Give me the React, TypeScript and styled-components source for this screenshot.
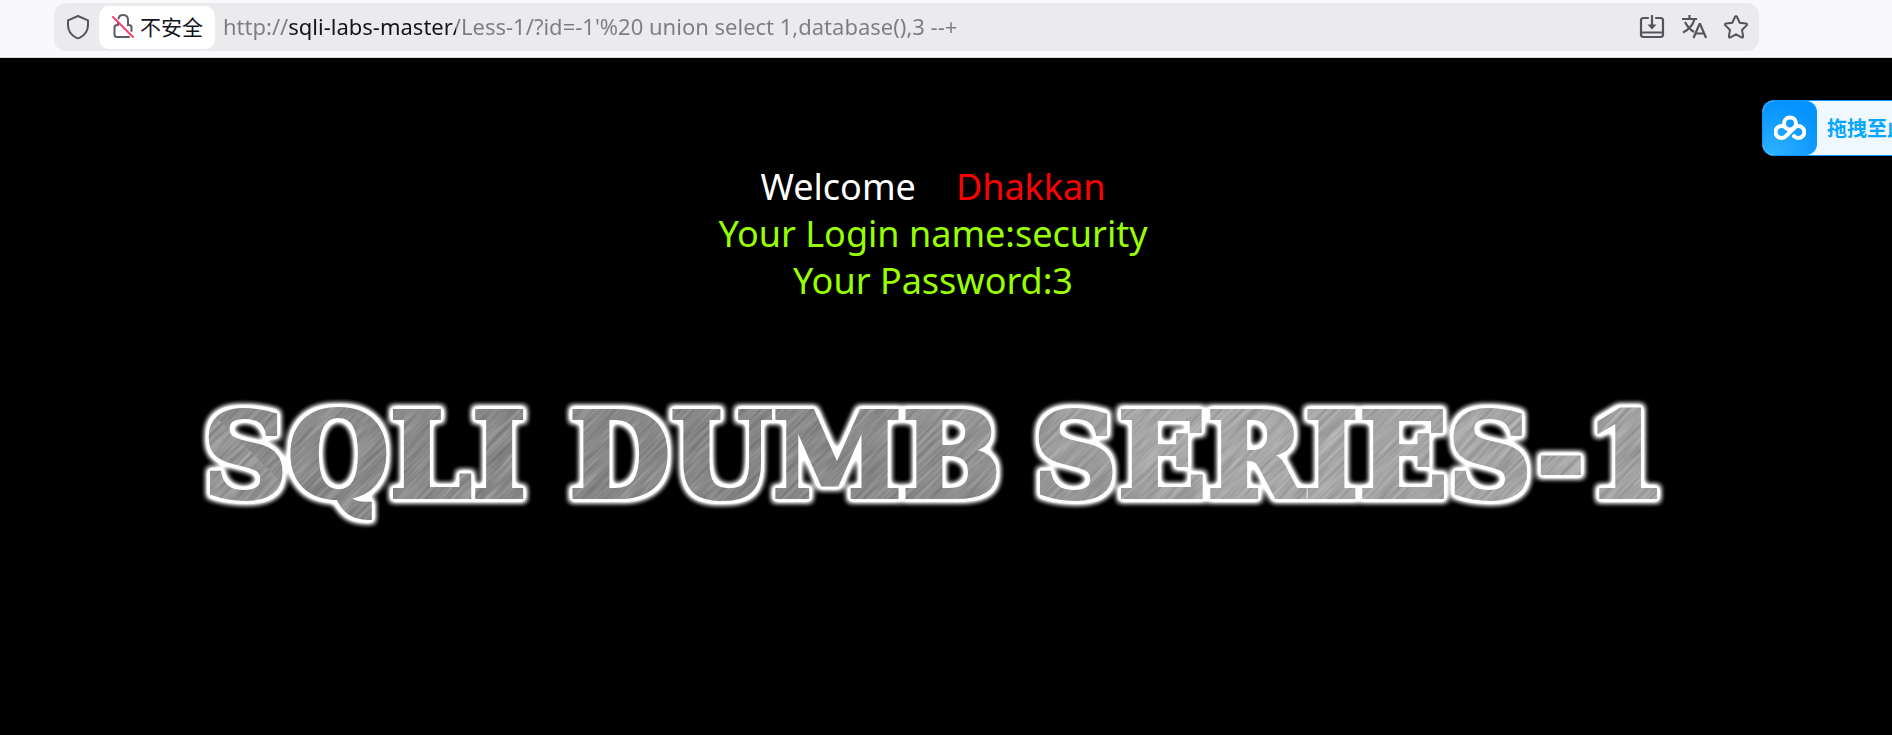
import React from "react";
import styled, { createGlobalStyle } from "styled-components";

const GlobalStyle = createGlobalStyle`
  * { box-sizing: border-box; }
  html { background: #000; }
  body { margin: 0; overflow-x: hidden; font-family: "Noto Sans", "Noto Sans CJK SC", sans-serif; }
`;

const Page = styled.div`
  min-height: 100vh;
  display: flex;
  flex-direction: column;
  background: #000;
`;

const Toolbar = styled.header`
  height: 58px;
  padding: 3px 133px 6px 54px;
  background: #f9f9fb;
  border-bottom: 1px solid #d4d4d8;
`;

const AddressBar = styled.div`
  height: 48px;
  display: flex;
  align-items: center;
  padding: 0 2px 0 8px;
  background: #ebebed;
  border-radius: 12px;
`;

const IconButton = styled.button<{ $width?: number }>`
  width: ${(p) => p.$width ?? 42}px;
  height: 42px;
  flex: none;
  display: grid;
  place-items: center;
  padding: 0;
  border: 0;
  background: none;
  color: #55545e;
`;

const SecurityChip = styled.button`
  height: 43px;
  width: 116px;
  margin-left: 5px;
  flex: none;
  display: flex;
  align-items: center;
  gap: 6px;
  padding: 0 0 2px 13px;
  border: 0;
  border-radius: 10px;
  background: #fff;
  color: #15141a;
  font: 21px/28px "Noto Sans CJK SC", sans-serif;
  white-space: nowrap;
`;

const UrlInput = styled.input`
  flex: 1;
  min-width: 0;
  height: 42px;
  margin-left: 8px;
  padding: 0 0 2px;
  border: 0;
  outline: 0;
  font: 22px/28px "Noto Sans", sans-serif;
  background: linear-gradient(90deg, #7d7d80 65px, #15141a 65px, #15141a 233px, #7d7d80 233px);
  background-clip: text;
  -webkit-background-clip: text;
  color: transparent;
`;

const Content = styled.main`
  display: flex;
  flex-direction: column;
  align-items: center;
  padding: 105px 26px 0 0;
`;

const Message = styled.div`
  color: #99ff00;
  font-size: 36px;
  line-height: 47px;
  text-align: center;
`;

const Line = styled.p`
  margin: 0;
`;

const Greeting = styled(Line)`
  display: flex;
  justify-content: center;
  gap: 40px;
  color: #fff;
`;

const UserName = styled.span`
  color: #f00;
`;

const Banner = styled.h1`
  margin: 100px 0 0;
  line-height: 0;
`;

const BannerArt = styled.svg`
  display: block;
  overflow: visible;
  font-family: "DejaVu Serif", serif;
  font-weight: 700;
  font-size: 117px;
`;

const UploadTab = styled.aside`
  position: absolute;
  top: 100px;
  right: 0;
  width: 130px;
  height: 56px;
  overflow: hidden;
  display: flex;
  align-items: center;
  gap: 10px;
  border: 1px solid #0a94ff;
  border-right: 0;
  border-radius: 12px 0 0 12px;
  background: #f0f8ff;
  color: #06a7ff;
  font: 700 20px/28px "Noto Sans CJK SC", sans-serif;
  white-space: nowrap;
`;

const UploadBadge = styled.div`
  width: 54px;
  height: 54px;
  flex: none;
  display: grid;
  place-items: center;
  border-radius: 11px;
  background: radial-gradient(circle at 20% 100%, #2eb1ff, #0593ff 75%);
`;

const Shield = () => (
  <svg width="24" height="26" viewBox="0 0 24 26" fill="none" stroke="currentColor" strokeWidth="2" strokeLinejoin="round">
    <path d="M12 2 22 6.300V11c0 6-3.800 10.500-8.500 12.900q-1.500.7-3 0C5.800 21.500 2 17 2 11V6.300Z" />
  </svg>
);

const CrossedLock = () => (
  <svg width="22" height="26" viewBox="0 0 22 26" fill="none" stroke="#5b5b66" strokeWidth="2" strokeLinecap="round">
    <path d="M6.500 5.500C7 3 9 2 11 2c3 0 5 2 5 5v5h1c1.500 0 2.500 1 2.500 2.500V18M6 9v3H5c-1.500 0-2.500 1-2.500 2.500v7C2.500 23 3.500 24 5 24h12" />
    <path d="m1 4 20 20" stroke="#ff3b6b" />
  </svg>
);

const SavePage = () => (
  <svg width="26" height="24" viewBox="0 0 26 24" fill="none" stroke="currentColor" strokeWidth="2.200" strokeLinecap="round">
    <path d="M9 3H4.500Q2 3 2 5.500v14Q2 22 4.500 22h17q2.500 0 2.500-2.500v-14Q24 3 21.500 3H17M2 17.500h22M13 1v10" />
    <path d="M8.500 9.500h9L13 14.500Z" fill="currentColor" stroke="none" />
  </svg>
);

const Translate = () => (
  <svg width="26" height="26" viewBox="0 0 26 26" fill="none" stroke="currentColor" strokeWidth="2.200">
    <path d="M1 5h15M8.500 1v4M4 8c2 4 5 7.500 9 10M13.500 5C12 11 8 15.500 2 18.500M12.500 24 18.500 10h.6l6 14M14.500 19.500h8.500" />
  </svg>
);

const Star = () => (
  <svg width="26" height="26" viewBox="0 0 26 26" fill="none" stroke="currentColor" strokeWidth="2" strokeLinejoin="round">
    <path d="M12 3q1-2 2 0l2.700 5.700 6.300.9q1.900.4.600 1.800L19 16l1.100 6.200q.2 2-1.600 1.100L13 20.300l-5.500 3q-1.800.9-1.600-1.100L7 16l-4.600-4.600q-1.300-1.400.6-1.800l6.300-.9Z" />
  </svg>
);

const CloudLogo = () => (
  <svg width="32" height="26" viewBox="0 0 32 26" fill="none" stroke="#fff" strokeWidth="4">
    <circle cx="16" cy="8.500" r="6" />
    <path d="M20 13 12 21A6 6 0 1 1 12 13" />
    <path d="M19.500 13.500A6 6 0 1 1 20 21.200" strokeLinecap="round" />
  </svg>
);

const words = [
  { text: "SQLI", x: 0 },
  { text: "DUMB", x: 366 },
  { text: "SERIES-1", x: 830 },
];

const BannerTitle = () => (
  <BannerArt width="1460" height="120" viewBox="0 0 1460 120">
    <defs>
      <filter id="streaks" x="0" y="0" width="100%" height="100%" colorInterpolationFilters="sRGB">
        <feTurbulence type="fractalNoise" baseFrequency="0.02 0.3" numOctaves="3" seed="4" />
        <feColorMatrix values="0.28 0 0 0 0.45  0.28 0 0 0 0.45  0.28 0 0 0 0.45  0 0 0 0 1" />
      </filter>
      <linearGradient id="shade">
        <stop offset="0" stopColor="#000" stopOpacity="0.08" />
        <stop offset="0.35" stopColor="#000" stopOpacity="0.1" />
        <stop offset="0.6" stopColor="#fff" stopOpacity="0.16" />
        <stop offset="1" stopColor="#fff" stopOpacity="0.08" />
      </linearGradient>
      <pattern id="metal" width="1500" height="1500" patternUnits="userSpaceOnUse" patternTransform="rotate(-45)">
        <rect width="1500" height="1500" filter="url(#streaks)" />
        <rect width="1100" height="1500" fill="url(#shade)" />
      </pattern>
      <filter id="glow" x="-5%" y="-30%" width="110%" height="160%" colorInterpolationFilters="sRGB">
        <feMorphology in="SourceAlpha" operator="dilate" radius="3" result="fat" />
        <feGaussianBlur in="fat" stdDeviation="3" result="soft" />
        <feComponentTransfer in="soft" result="edge">
          <feFuncA type="linear" slope="1.900" intercept="-0.05" />
        </feComponentTransfer>
        <feFlood floodColor="#fff" />
        <feComposite in2="edge" operator="in" result="halo" />
        <feMerge>
          <feMergeNode in="halo" />
          <feMergeNode in="SourceGraphic" />
        </feMerge>
      </filter>
    </defs>
    <g filter="url(#glow)" fill="url(#metal)" stroke="url(#metal)" strokeWidth="4">
      {words.map((w) => (
        <text key={w.text} x={w.x} y="93">{w.text}</text>
      ))}
    </g>
  </BannerArt>
);

export default function App() {
  return (
    <>
      <GlobalStyle />
      <Page>
        <Toolbar>
          <AddressBar>
            <IconButton $width={32} aria-label="Tracking protection"><Shield /></IconButton>
            <SecurityChip><CrossedLock />不安全</SecurityChip>
            <UrlInput aria-label="Address" defaultValue="http://sqli-labs-master/Less-1/?id=-1'%20 union select 1,database(),3 --+" />
            <IconButton aria-label="Save page"><SavePage /></IconButton>
            <IconButton aria-label="Translate page"><Translate /></IconButton>
            <IconButton aria-label="Bookmark page"><Star /></IconButton>
          </AddressBar>
        </Toolbar>
        <Content>
          <Message>
            <Greeting><span>Welcome</span><UserName>Dhakkan</UserName></Greeting>
            <Line>Your Login name:security</Line>
            <Line>Your Password:3</Line>
          </Message>
          <Banner><BannerTitle /></Banner>
        </Content>
      </Page>
      <UploadTab>
        <UploadBadge><CloudLogo /></UploadBadge>
        拖拽至此
      </UploadTab>
    </>
  );
}
